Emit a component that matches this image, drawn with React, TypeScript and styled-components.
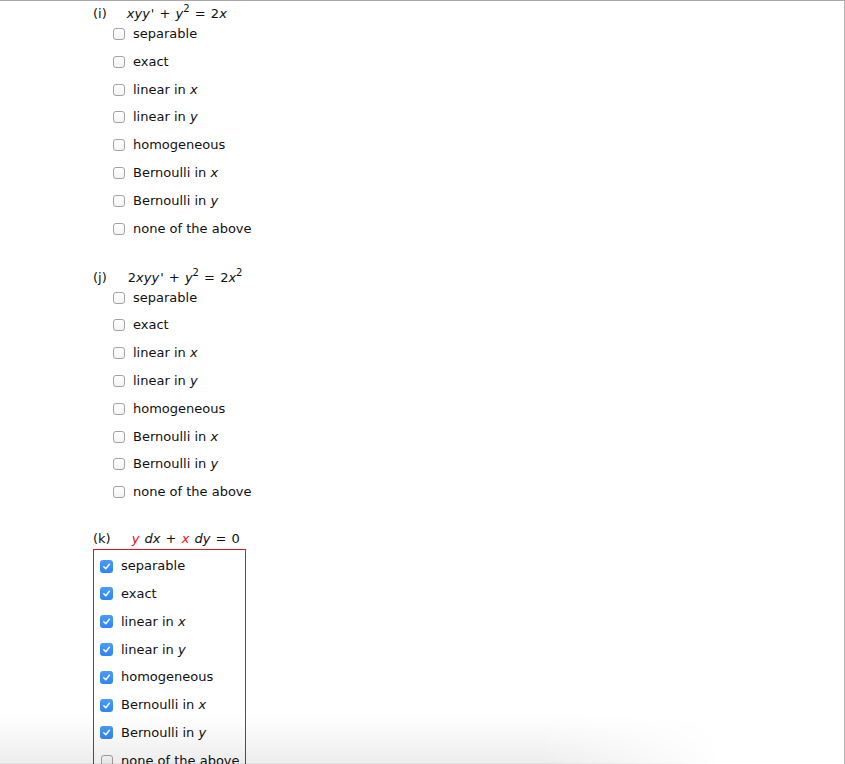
import React from 'react';
import styled, { createGlobalStyle } from 'styled-components';

const GlobalStyle = createGlobalStyle`
  html, body {
    margin: 0;
    padding: 0;
    background: #ffffff;
  }
  body {
    font-family: 'DejaVu Sans', Verdana, sans-serif;
    font-size: 13px;
    color: #111;
  }
`;

type Option = { text: string; v?: string };

const makeOptions = (): Option[] => [
  { text: 'separable' },
  { text: 'exact' },
  { text: 'linear in ', v: 'x' },
  { text: 'linear in ', v: 'y' },
  { text: 'homogeneous' },
  { text: 'Bernoulli in ', v: 'x' },
  { text: 'Bernoulli in ', v: 'y' },
  { text: 'none of the above' },
];

const CheckIcon = () => (
  <svg width="9" height="9" viewBox="0 0 10 10">
    <path
      d="M2 5.3 L4.2 7.5 L8.2 2.6"
      fill="none"
      stroke="#fff"
      strokeWidth="1.7"
      strokeLinecap="round"
      strokeLinejoin="round"
    />
  </svg>
);

const Checkbox = ({ checked }: { checked: boolean }) => (
  <BoxSlot>
    {checked ? (
      <Checked>
        <CheckIcon />
      </Checked>
    ) : (
      <Unchecked />
    )}
  </BoxSlot>
);

const OptionList = ({ options, checked }: { options: Option[]; checked: number[] }) => (
  <>
    {options.map((o, i) => (
      <Row key={i}>
        <Checkbox checked={checked.includes(i)} />
        <span>
          {o.text}
          {o.v && <Var>{o.v}</Var>}
        </span>
      </Row>
    ))}
  </>
);

const App = () => {
  return (
    <>
      <GlobalStyle />
      <Page>
        <Question $after={33}>
          <Heading>
            <span>(i)</span>
            <Equation $gap={20}>
              <Var>xyy</Var>
              <Prime>'</Prime> + <Var>y</Var>
              <Sup>2</Sup> = 2<Var>x</Var>
            </Equation>
          </Heading>
          <List>
            <OptionList options={makeOptions()} checked={[]} />
          </List>
        </Question>

        <Question $after={31}>
          <Heading>
            <span>(j)</span>
            <Equation $gap={21}>
              2<Var>xyy</Var>
              <Prime>'</Prime> + <Var>y</Var>
              <Sup>2</Sup> = 2<Var>x</Var>
              <Sup>2</Sup>
            </Equation>
          </Heading>
          <List>
            <OptionList options={makeOptions()} checked={[]} />
          </List>
        </Question>

        <Question $after={0}>
          <Heading>
            <span>(k)</span>
            <Equation $gap={21}>
              <Var $red>y</Var> <Var>dx</Var> + <Var $red>x</Var> <Var>dy</Var> = 0
            </Equation>
          </Heading>
          <WrongBox>
            <OptionList options={makeOptions()} checked={[0, 1, 2, 3, 4, 5, 6]} />
          </WrongBox>
        </Question>
        <BottomShade />
      </Page>
    </>
  );
};

const Page = styled.div`
  position: relative;
  box-sizing: border-box;
  width: 845px;
  height: 764px;
  overflow: hidden;
  border-top: 1px solid #a9a9a9;
  border-right: 1px solid #b4b4b4;
  padding: 5px 0 0 93px;
`;

const Question = styled.div<{ $after: number }>`
  margin-bottom: ${(p) => p.$after}px;
`;

const Heading = styled.div`
  display: flex;
  align-items: baseline;
  height: 16px;
  line-height: 16px;
  white-space: pre;
`;

const Equation = styled.span<{ $gap: number }>`
  margin-left: ${(p) => p.$gap}px;
  word-spacing: 1px;
`;

const Var = styled.i<{ $red?: boolean }>`
  font-style: italic;
  color: ${(p) => (p.$red ? '#ee1111' : 'inherit')};
`;

const Prime = styled.span`
  margin-left: 1px;
`;

const Sup = styled.sup`
  font-size: 10px;
  line-height: 0;
  vertical-align: 6px;
`;

const List = styled.div`
  padding: 4px 0 0 19px;
`;

const WrongBox = styled.div`
  box-sizing: border-box;
  width: 153px;
  margin-top: 2px;
  padding: 8px 0 0 6px;
  border: 1px solid #e3141c;
  height: 260px;
`;

const Row = styled.div`
  display: flex;
  align-items: center;
  height: 16px;
  line-height: 16px;
  margin-bottom: 11.8px;
  white-space: pre;
`;

const BoxSlot = styled.span`
  display: inline-flex;
  align-items: center;
  width: 13px;
  height: 13px;
  margin-right: 8px;
  flex-shrink: 0;
`;

const Unchecked = styled.span`
  box-sizing: border-box;
  display: block;
  width: 12px;
  height: 12px;
  margin-left: 1px;
  border: 1px solid #a3a3a3;
  border-radius: 3px;
  background: linear-gradient(#ffffff, #f3f3f3);
`;

const Checked = styled.span`
  box-sizing: border-box;
  display: flex;
  align-items: center;
  justify-content: center;
  width: 13px;
  height: 13px;
  border-radius: 3px;
  background: linear-gradient(#4a9bf8, #2f84f2);
`;

const BottomShade = styled.div`
  position: absolute;
  left: 0;
  bottom: 0;
  width: 720px;
  height: 48px;
  pointer-events: none;
  background: linear-gradient(rgba(0, 0, 0, 0), rgba(0, 0, 0, 0.07));
  border-bottom: 1px solid rgba(0, 0, 0, 0.12);
  -webkit-mask-image: linear-gradient(to right, #000 75%, transparent 100%);
  mask-image: linear-gradient(to right, #000 75%, transparent 100%);
`;

export default App;
